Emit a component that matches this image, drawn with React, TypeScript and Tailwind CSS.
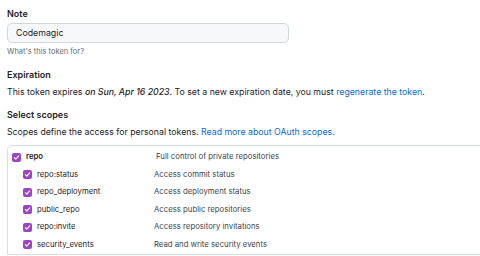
import type { ReactNode } from 'react';

type Scope = { name: string; desc: string };

const SUB_SCOPES: Scope[] = [
  { name: 'repo:status', desc: 'Access commit status' },
  { name: 'repo_deployment', desc: 'Access deployment status' },
  { name: 'public_repo', desc: 'Access public repositories' },
  { name: 'repo:invite', desc: 'Access repository invitations' },
  { name: 'security_events', desc: 'Read and write security events' },
];

// Checked box drawn as a small purple square with a white tick.
function Check() {
  return (
    <span className="flex h-[9px] w-[9px] shrink-0 items-center justify-center rounded-[2px] bg-[#9b44c4]">
      <svg viewBox="0 0 10 10" className="h-[7px] w-[7px]">
        <path d="M2 5.3l2 2L8.2 2.8" fill="none" stroke="white" strokeWidth="1.6" strokeLinecap="round" strokeLinejoin="round" />
      </svg>
    </span>
  );
}

function Heading({ children, className }: { children: ReactNode; className?: string }) {
  return <div className={'text-[9px] font-semibold leading-[12px] text-[#1f2328] ' + (className ?? '')}>{children}</div>;
}

export default function App() {
  return (
    <div className="h-[256px] w-[480px] overflow-hidden bg-white font-['Inter','Liberation_Sans',sans-serif] text-[#1f2328]">
      <div className="px-[7px] pt-[8px]">
        <Heading>Note</Heading>
        <div className="mt-[3px] flex h-[20px] w-[282px] items-center rounded-[5px] border border-[#d0d7de] bg-[#f6f8fa] px-[8px] text-[8.8px]">
          Codemagic
        </div>
        <div className="mt-[4px] text-[7.5px] leading-[10px] text-[#656d76]">What's this token for?</div>

        <Heading className="mt-[12px]">Expiration</Heading>
        <p className="mt-[5px] whitespace-nowrap text-[8.75px] leading-[12px]">
          This token expires <em className="font-medium">on Sun, Apr 16 2023</em>. To set a new expiration date, you must{' '}
          <span className="text-[#0969da]">regenerate the token</span>.
        </p>

        <Heading className="mt-[11px]">Select scopes</Heading>
        <p className="mt-[5px] whitespace-nowrap text-[8.75px] leading-[12px]">
          Scopes define the access for personal tokens.{' '}
          <span className="text-[#0969da]">Read more about OAuth scopes.</span>
        </p>

        <div className="mt-[7px] w-[500px] rounded-t-[5px] border border-[#d8dee4] pt-[2px] text-[7.75px]">
          <div className="flex h-[18px] items-center pl-[4px]">
            <div className="flex w-[144px] items-center gap-[5px]">
              <Check />
              <span className="font-semibold">repo</span>
            </div>
            <span className="text-[#3b434b]">Full control of private repositories</span>
          </div>
          {SUB_SCOPES.map((s) => (
            <div key={s.name} className="flex h-[17.5px] items-center pl-[15px]">
              <div className="flex w-[131px] items-center gap-[5px]">
                <Check />
                <span>{s.name}</span>
              </div>
              <span className="text-[#3b434b]">{s.desc}</span>
            </div>
          ))}
        </div>
      </div>
    </div>
  );
}
